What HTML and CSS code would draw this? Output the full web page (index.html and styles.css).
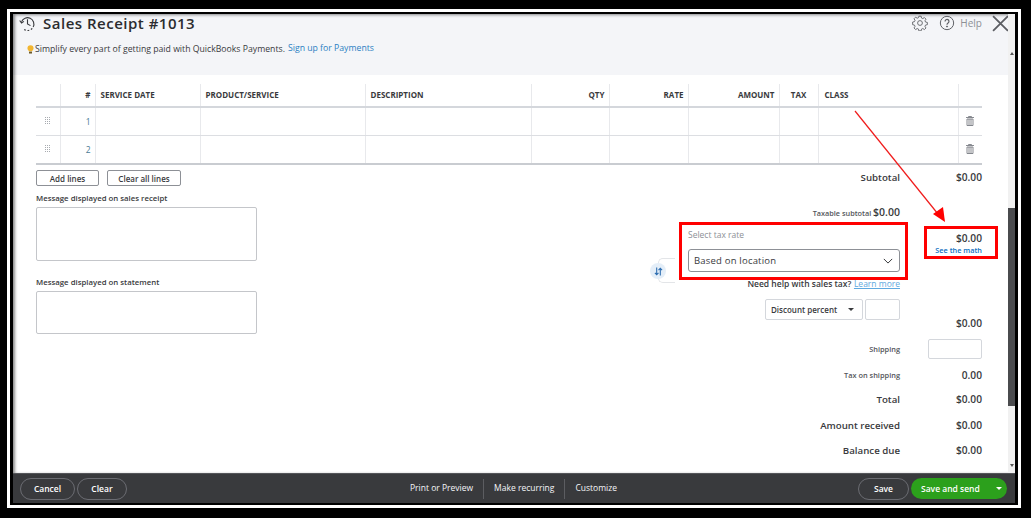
FILE: index.html
```html
<!DOCTYPE html>
<html>
<head>
  <title>Sales Receipt #1013</title>
  <link rel="stylesheet" href="styles.css">
</head>
<body>
  <div class="frame">
    <div class="app">
      <div class="content">
        <div class="sheet">
          <div class="top">
            <div class="title-bar">
              <svg class="clock" viewBox="0 0 20 20" fill="none" stroke="#393a3d" stroke-width="1.300">
                <path d="M3 8a7.500 7.500 0 1 1 3 9" stroke-dasharray="24 2 2 2 2 2 2 2"/>
                <path d="M10 5v5.500l3.500 2"/>
                <path d="M.8 6.500L3 9.500 5.800 7.500"/>
              </svg>
              <h1>Sales Receipt #1013</h1>
              <div class="tools">
                <svg class="gear" viewBox="0 0 20 20" fill="none" stroke="#5c5e63" stroke-width="1.100">
                  <circle cx="10" cy="10" r="3"/>
                  <path d="M8.600 1.500h2.800l.5 2.300 1.600.7 2-1.300 2 2-1.300 2 .7 1.600 2.300.5v2.800l-2.300.5-.7 1.600 1.300 2-2 2-2-1.300-1.600.7-.5 2.300H8.600l-.5-2.300-1.600-.7-2 1.300-2-2 1.300-2-.7-1.600-2.300-.5V8.800l2.300-.5.7-1.600-1.300-2 2-2 2 1.300 1.600-.7z"/>
                </svg>
                <svg class="help-icon" viewBox="0 0 18 18" fill="none" stroke="#5c5e63" stroke-width="1.100">
                  <circle cx="9" cy="9" r="7.500"/>
                  <path d="M6.800 7.200a2.200 2.200 0 1 1 3.400 1.800c-.8.5-1.200 1-1.200 1.900" stroke-width="1.300"/>
                  <circle cx="9" cy="13" r=".6" fill="#5c5e63"/>
                </svg>
                <span class="help-text">Help</span>
                <svg class="close" viewBox="0 0 16 16" fill="none" stroke="#5c5e63" stroke-width="1.700">
                  <path d="M1 1l14 14M15 1L1 15"/>
                </svg>
              </div>
            </div>
            <div class="promo">
              <svg class="bulb" viewBox="0 0 8 10">
                <path d="M.5 3.500a3.500 3.300 0 0 1 7 0c0 1.500-1.300 2.300-1.600 3.500H2.100C1.800 5.800.5 5 .5 3.500z" fill="#f2b632"/>
                <rect x="2.300" y="7.400" width="3.400" height="2.200" fill="#6b5a2a"/>
              </svg>
              <span>Simplify every part of getting paid with QuickBooks Payments.</span>
              <a class="link" href="#">Sign up for Payments</a>
            </div>
          </div>

          <table class="lines">
            <colgroup>
              <col class="c-drag"><col class="c-num"><col class="c-date"><col class="c-prod"><col class="c-desc">
              <col class="c-qty"><col class="c-rate"><col class="c-amt"><col class="c-tax"><col class="c-class"><col class="c-del">
            </colgroup>
            <thead>
              <tr>
                <th></th><th class="right">#</th><th>SERVICE DATE</th><th>PRODUCT/SERVICE</th><th>DESCRIPTION</th>
                <th class="right">QTY</th><th class="right">RATE</th><th class="right">AMOUNT</th><th class="center">TAX</th><th class="class-head">CLASS</th><th></th>
              </tr>
            </thead>
            <tbody>
              <tr>
                <td class="center"><svg class="drag" viewBox="0 0 8 8"><path d="M1 .5h1M3 .5h1M5 .5h1M1 2.500h1M3 2.500h1M5 2.500h1M1 4.500h1M3 4.500h1M5 4.500h1M1 6.500h1M3 6.500h1M5 6.500h1" stroke="#a8abb0" stroke-width="1"/></svg></td>
                <td class="right num">1</td><td></td><td></td><td></td><td></td><td></td><td></td><td></td><td></td>
                <td class="center"><svg class="trash" viewBox="0 0 8 10" fill="none" stroke="#7b7e84" stroke-width=".9"><path d="M0 1.500h8M2.500 1.500V.5h3v1M1 3h6v6.500H1zM3 3v6.500M5 3v6.500"/></svg></td>
              </tr>
              <tr>
                <td class="center"><svg class="drag" viewBox="0 0 8 8"><path d="M1 .5h1M3 .5h1M5 .5h1M1 2.500h1M3 2.500h1M5 2.500h1M1 4.500h1M3 4.500h1M5 4.500h1M1 6.500h1M3 6.500h1M5 6.500h1" stroke="#a8abb0" stroke-width="1"/></svg></td>
                <td class="right num">2</td><td></td><td></td><td></td><td></td><td></td><td></td><td></td><td></td>
                <td class="center"><svg class="trash" viewBox="0 0 8 10" fill="none" stroke="#7b7e84" stroke-width=".9"><path d="M0 1.500h8M2.500 1.500V.5h3v1M1 3h6v6.500H1zM3 3v6.500M5 3v6.500"/></svg></td>
              </tr>
            </tbody>
          </table>

          <div class="lower">
            <div class="left-col">
              <div class="line-buttons">
                <button class="btn add">Add lines</button>
                <button class="btn clear-all">Clear all lines</button>
              </div>
              <label class="msg-label first">Message displayed on sales receipt</label>
              <div class="msg-box tall"></div>
              <label class="msg-label second">Message displayed on statement</label>
              <div class="msg-box short"></div>
            </div>

            <div class="summary">
              <div class="row subtotal">
                <span class="label strong">Subtotal</span>
                <span class="value strong">$0.00</span>
              </div>
              <div class="row taxable">
                <span class="label small">Taxable subtotal <b>$0.00</b></span>
                <span class="value"></span>
              </div>
              <div class="row tax-block">
                <div class="tax-field">
                  <div class="tax-label">Select tax rate</div>
                  <div class="tax-select">
                    <span>Based on location</span>
                    <svg class="chev" viewBox="0 0 12 7" fill="none" stroke="#393a3d" stroke-width="1.200"><path d="M1 1l5 5 5-5"/></svg>
                  </div>
                </div>
                <div class="value tax-value">
                  <div class="strong">$0.00</div>
                  <a class="math" href="#">See the math</a>
                </div>
              </div>
              <div class="row need-help">
                <span class="label"><span class="help-q">Need help with sales tax?</span> <a class="learn" href="#">Learn more</a></span>
                <span class="value"></span>
              </div>
              <div class="row discount">
                <div class="label discount-fields">
                  <div class="discount-select">Discount percent <i class="caret"></i></div>
                  <div class="field discount-input"></div>
                </div>
                <span class="value strong discount-value">$0.00</span>
              </div>
              <div class="row shipping">
                <span class="label small">Shipping</span>
                <span class="value"><span class="field ship-input"></span></span>
              </div>
              <div class="row tax-ship">
                <span class="label small">Tax on shipping</span>
                <span class="value strong">0.00</span>
              </div>
              <div class="row total">
                <span class="label strong">Total</span>
                <span class="value strong">$0.00</span>
              </div>
              <div class="row received">
                <span class="label strong">Amount received</span>
                <span class="value strong">$0.00</span>
              </div>
              <div class="row due">
                <span class="label strong">Balance due</span>
                <span class="value strong">$0.00</span>
              </div>
            </div>
          </div>
        </div>

        <div class="scrollbar">
          <i class="arrow up"></i>
          <div class="thumb"></div>
          <i class="arrow down"></i>
        </div>
      </div>

      <div class="footer">
        <div class="foot-left">
          <button class="pill cancel">Cancel</button>
          <button class="pill clear">Clear</button>
        </div>
        <div class="foot-mid">
          <a href="#">Print or Preview</a>
          <a href="#">Make recurring</a>
          <a href="#">Customize</a>
        </div>
        <div class="foot-right">
          <button class="pill save">Save</button>
          <button class="send">Save and send <i class="send-caret"></i></button>
        </div>
      </div>
    </div>
  </div>

  <div class="toggle">
    <span class="toggle-dot">
      <svg viewBox="0 0 10 9" fill="none" stroke="#2b6cb0" stroke-width="1.200"><path d="M3 0v8M1 6l2 2 2-2M7 9V1M5 3l2-2 2 2"/></svg>
    </span>
  </div>

  <div class="callout tax-callout"></div>
  <div class="callout math-callout"></div>
  <svg class="arrow-note" viewBox="0 0 1031 518">
    <path d="M855 111L938 214" stroke="#f01c1c" stroke-width="1.200" fill="none"/>
    <path d="M945 222L933 214L943 207z" fill="#f00"/>
  </svg>
</body>
</html>
```

FILE: styles.css
```css
* {
  box-sizing: border-box;
}

html, body {
  height: 518px;
  margin: 0;
  overflow: hidden;
}

body {
  background: #000;
  padding: 9px 10px 10px 7px;
  font-family: "Open Sans", Arial, sans-serif;
  color: #393a3d;
}

a {
  text-decoration: none;
}

.frame {
  height: 100%;
  border: 3px solid #fff;
  background: #000;
  padding: 2px 3px;
}

.app {
  height: 100%;
  display: flex;
  flex-direction: column;
}

.content {
  flex: 1;
  display: flex;
  min-height: 0;
}

.sheet {
  flex: 1;
  background: #fff;
  box-shadow: inset 3px 0 3px -1px rgba(0, 0, 0, .45);
}

/* header */
.top {
  height: 61px;
  background: #f4f5f8;
  padding-left: 6px;
  box-shadow: inset 3px 2px 3px -1px rgba(0, 0, 0, .45);
}

.title-bar {
  height: 18px;
  display: flex;
  align-items: center;
}

.clock {
  width: 17px;
  height: 17px;
  margin-right: 7px;
}

h1 {
  margin: 0;
  font-size: 15px;
  font-weight: 600;
  letter-spacing: .5px;
  color: #2b2c2f;
}

.tools {
  margin-left: auto;
  margin-right: -1px;
  display: flex;
  align-items: center;
}

.gear {
  width: 16px;
  height: 16px;
  margin-right: 11px;
}

.help-icon {
  width: 16px;
  height: 16px;
  margin-right: 5px;
}

.help-text {
  font-size: 10px;
  color: #8d9096;
  margin-right: 10px;
}

.close {
  width: 17px;
  height: 17px;
}

.promo {
  margin-top: 10px;
  padding-left: 8px;
  font-size: 8.700px;
  display: flex;
  align-items: center;
  height: 14px;
}

.bulb {
  width: 7px;
  height: 9px;
  margin-right: 1px;
}

.link {
  color: #2b7fc3;
  margin-left: 3px;
  position: relative;
  top: -1px;
}

/* line table */
.lines {
  width: 946px;
  margin: 9px 0 0 23px;
  border-collapse: collapse;
  table-layout: fixed;
}

.c-drag { width: 24px; }
.c-num { width: 35px; }
.c-date { width: 105px; }
.c-prod { width: 165px; }
.c-desc { width: 166px; }
.c-qty { width: 78px; }
.c-rate { width: 79px; }
.c-amt { width: 91px; }
.c-tax { width: 39px; }
.c-class { width: 140px; }
.c-del { width: 24px; }

.lines th {
  height: 23px;
  padding: 0 4px 2px 5px;
  font-size: 8px;
  font-weight: 700;
  text-align: left;
  border-bottom: 2px solid #d4d7dc;
  border-left: 1px solid #e8e9ec;
  color: #393a3d;
}

.lines .class-head {
  padding-left: 6px;
}

.lines td {
  height: 29px;
  padding: 0 4px 0 5px;
  font-size: 8.500px;
  border-bottom: 1px solid #dcdee2;
  border-left: 1px solid #e8e9ec;
}

.lines tbody tr:first-child td {
  height: 28px;
}

.lines tbody tr:last-child td {
  border-bottom: 2px solid #c9ccd1;
}

.lines th:first-child,
.lines td:first-child {
  border-left: 0;
}

.lines .right {
  text-align: right;
}

.lines .center {
  text-align: center;
  padding: 0 0 2px;
}

.lines td.center {
  padding: 0;
}

.lines .num {
  color: #4a7a94;
}

.drag {
  width: 8px;
  height: 8px;
  display: block;
  margin: 0 auto;
}

.trash {
  width: 8px;
  height: 10px;
  display: block;
  margin: 0 auto;
}

/* lower part */
.lower {
  display: flex;
  justify-content: space-between;
  padding-left: 23px;
  padding-right: 26px;
}

.line-buttons {
  margin-top: 5px;
  display: flex;
  gap: 8px;
}

.btn {
  height: 16px;
  padding: 0;
  background: #fff;
  border: 1px solid #8d9096;
  border-radius: 2px;
  font: 600 8px "Open Sans", Arial, sans-serif;
  color: #393a3d;
}

.add {
  width: 63px;
}

.clear-all {
  width: 74px;
}

.msg-label {
  display: block;
  font-size: 7.800px;
  font-weight: 600;
  height: 12px;
  line-height: 12px;
}

.msg-label.first {
  margin-top: 6px;
}

.msg-label.second {
  margin-top: 15px;
}

.msg-box {
  width: 221px;
  border: 1px solid #c4c6ca;
  border-radius: 2px;
}

.tall {
  height: 54px;
  margin-top: 3px;
}

.short {
  height: 43px;
  margin-top: 3px;
}

/* totals */
.summary {
  width: 294px;
  padding-top: 2px;
}

.row {
  display: flex;
  align-items: center;
  height: 20px;
}

.label {
  flex: 1;
  text-align: right;
  font-size: 10px;
}

.value {
  width: 82px;
  text-align: right;
  font-size: 10px;
}

.label.strong {
  font-size: 9.700px;
  font-weight: 600;
}

.value.strong,
.tax-value .strong {
  font-size: 10.200px;
  font-weight: 600;
}

.small {
  font-size: 7.400px;
  font-weight: 600;
  color: #53555a;
}

.small b {
  font-size: 10.500px;
  font-weight: 600;
  color: #393a3d;
}

.taxable {
  margin-top: 15px;
}

.taxable .label {
  font-size: 7.300px;
}

.tax-block {
  height: 44px;
  margin-top: 7px;
  align-items: flex-start;
}

.tax-field {
  flex: 1;
}

.tax-label {
  height: 20px;
  line-height: 12px;
  font-size: 8.500px;
  color: #8d9096;
}

.tax-select {
  height: 23px;
  width: 212px;
  padding: 0 6px 0 5px;
  border: 1px solid #8d9096;
  border-radius: 3px;
  display: flex;
  align-items: center;
  justify-content: space-between;
  font-size: 9.500px;
  letter-spacing: .2px;
}

.chev {
  width: 10px;
  height: 6px;
}

.tax-value {
  line-height: 13px;
  margin-top: 3px;
}

.math {
  display: block;
  font-size: 7.300px;
  font-weight: 600;
  color: #0d6fc0;
  line-height: 10px;
}

.need-help {
  height: 14px;
  margin-top: 3px;
}

.help-q {
  font-size: 8.500px;
  font-weight: 600;
}

.learn {
  font-size: 8.500px;
  color: #5fa9e0;
  text-decoration: underline;
}

.discount {
  height: 31px;
  margin-top: 9px;
  align-items: flex-start;
}

.discount-fields {
  display: flex;
  justify-content: flex-end;
  gap: 2px;
}

.discount-select {
  width: 98px;
  height: 21px;
  padding: 0 8px 0 5px;
  border: 1px solid #d4d7dc;
  border-radius: 2px;
  display: flex;
  align-items: center;
  justify-content: space-between;
  font-size: 8px;
  font-weight: 600;
}

.caret {
  border-left: 3px solid transparent;
  border-right: 3px solid transparent;
  border-top: 3px solid #393a3d;
}

.field {
  display: block;
  border: 1px solid #d4d7dc;
  border-radius: 2px;
  background: #fff;
}

.discount-input {
  width: 35px;
  height: 21px;
}

.discount-value {
  align-self: flex-end;
  line-height: 14px;
}

.shipping {
  margin-top: 9px;
}

.ship-input {
  width: 54px;
  height: 20px;
  margin-left: auto;
}

.tax-ship {
  margin-top: 6px;
}

.total {
  margin-top: 4px;
}

.received {
  margin-top: 6px;
}

.due {
  margin-top: 5px;
}

/* scrollbar */
.scrollbar {
  width: 7px;
  background: #f1f1f1;
  padding-top: 38px;
  display: flex;
  flex-direction: column;
  align-items: center;
}

.thumb {
  width: 7px;
  height: 198px;
  margin-top: 153px;
  background: #4a4b4e;
}

.arrow {
  width: 0;
  height: 0;
  border-left: 2px solid transparent;
  border-right: 2px solid transparent;
}

.arrow.up {
  border-bottom: 3px solid #555;
}

.arrow.down {
  margin-top: 58px;
  border-top: 3px solid #555;
}

/* footer */
.footer {
  height: 30px;
  background: #393a3d;
  border-top: 1px solid #55565a;
  display: flex;
  align-items: center;
  padding: 0 8px 0 7px;
  color: #fff;
}

.foot-left {
  display: flex;
  gap: 2px;
}

.pill {
  height: 22px;
  padding: 0;
  background: transparent;
  border: 1px solid #6b6c72;
  border-radius: 11px;
  color: #fff;
  font: 600 8.500px "Open Sans", Arial, sans-serif;
}

.cancel {
  width: 55px;
}

.clear {
  width: 50px;
}

.foot-mid {
  margin-left: 273px;
  display: flex;
  height: 20px;
  align-items: center;
}

.foot-mid a {
  height: 20px;
  line-height: 17px;
  padding: 0 10px;
  font-size: 8.500px;
  color: #f4f5f8;
  border-left: 1px solid #5c5d61;
}

.foot-mid a:first-child {
  border-left: 0;
}

.foot-right {
  margin-left: auto;
  display: flex;
  gap: 2px;
}

.save {
  width: 51px;
}

.send {
  width: 96px;
  height: 21px;
  padding: 0 5px 0 10px;
  background: #2ca01c;
  border: 0;
  border-radius: 11px;
  color: #fff;
  font: 600 8.500px "Open Sans", Arial, sans-serif;
  display: flex;
  align-items: center;
  justify-content: space-between;
}

.send-caret {
  border-left: 3px solid transparent;
  border-right: 3px solid transparent;
  border-top: 3px solid #fff;
}

/* annotations and overlays */
.toggle {
  position: absolute;
  left: 658px;
  top: 258px;
  width: 17px;
  height: 25px;
  border: 1px solid #e3e5e8;
  border-right: 0;
  border-radius: 5px 0 0 5px;
}

.toggle-dot {
  position: absolute;
  left: -9px;
  top: 4px;
  width: 16px;
  height: 16px;
  border-radius: 50%;
  background: #e4eef8;
  display: flex;
  align-items: center;
  justify-content: center;
}

.toggle-dot svg {
  width: 9px;
  height: 9px;
}

.callout {
  position: absolute;
  border: 3px solid #f00;
}

.tax-callout {
  left: 679px;
  top: 222px;
  width: 229px;
  height: 58px;
}

.math-callout {
  left: 924px;
  top: 226px;
  width: 74px;
  height: 33px;
}

.arrow-note {
  position: absolute;
  left: 0;
  top: 0;
  width: 1031px;
  height: 518px;
  pointer-events: none;
}
```
